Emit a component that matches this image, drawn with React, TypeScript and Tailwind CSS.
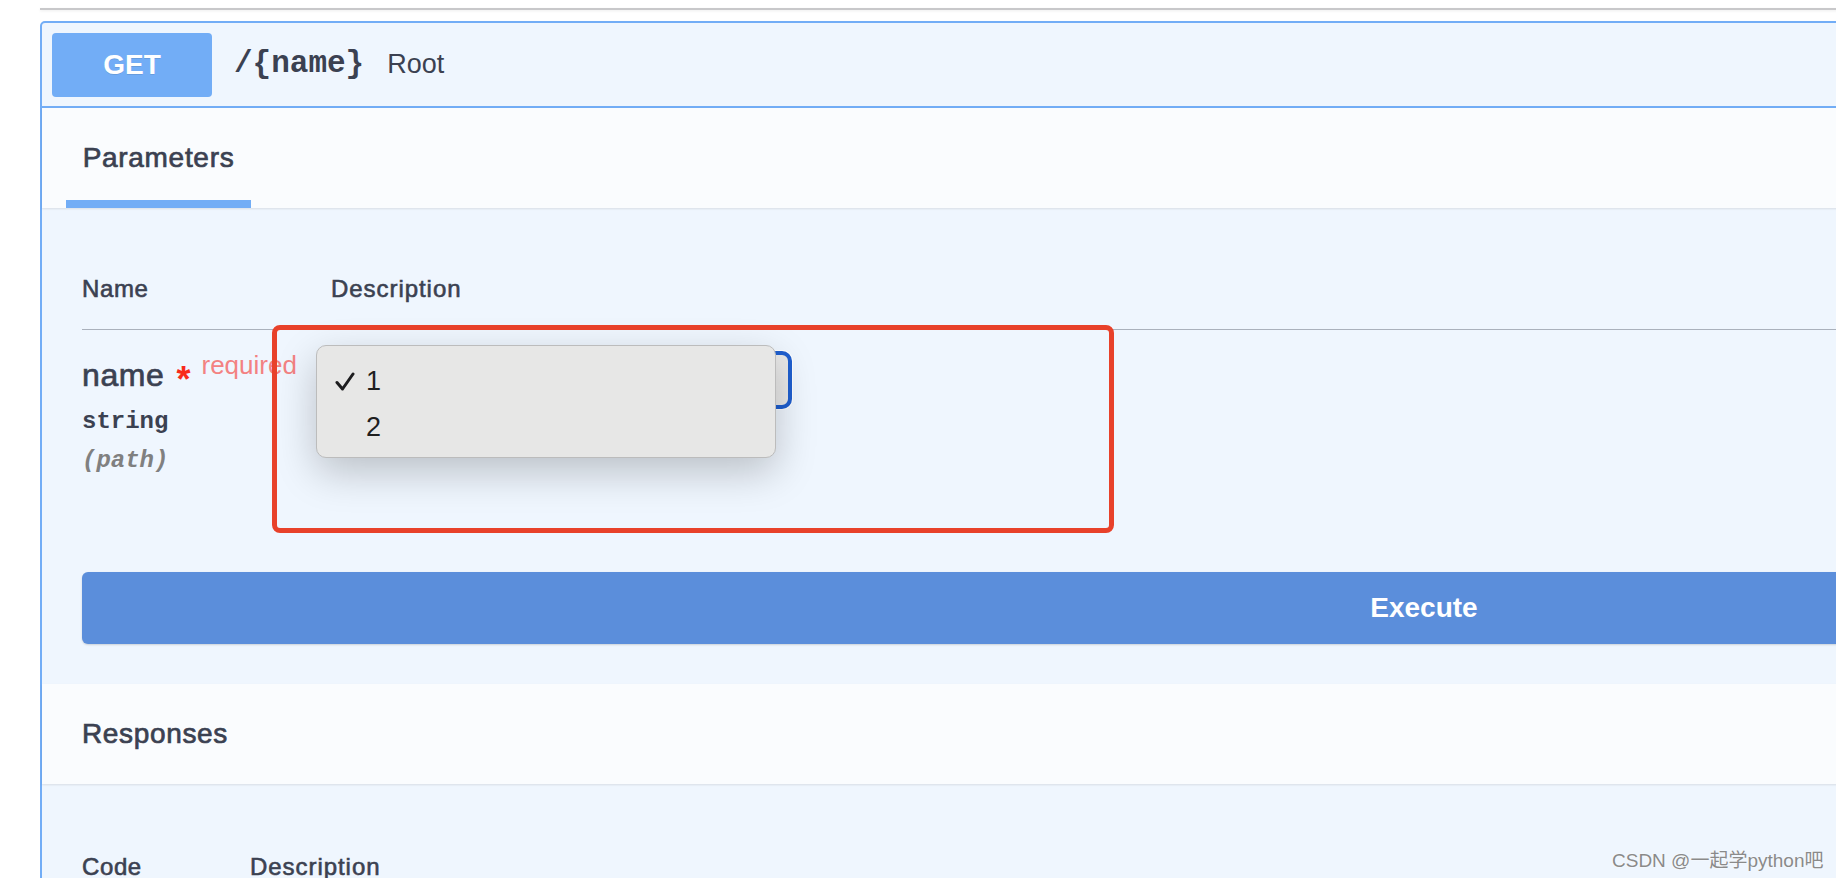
import React from 'react';

function CheckMark() {
  return (
    <svg width="20" height="19" viewBox="0 0 20 19" className="block">
      <path d="M2 10.5 L7.5 17 L18 2" fill="none" stroke="#1d1d1f" strokeWidth="3" strokeLinecap="round" strokeLinejoin="round" />
    </svg>
  );
}

export default function App() {
  return (
    <div className="relative h-[878px] w-[1836px] overflow-hidden bg-white font-['Liberation_Sans',Arial,sans-serif] text-[#3b4151]">
      <div className="w-[2808px]">
        <div className="ml-[40px] mt-[8px] h-[2px] bg-[#c8c8ca] shadow-[0_1px_3px_rgba(0,0,0,0.08)]" />

        {/* operation block */}
        <div className="ml-[40px] mt-[11px] rounded-[5px] border-2 border-[#72adf6] bg-[#eff6fe]">
          {/* summary */}
          <div className="flex h-[85px] items-center border-b-2 border-[#72adf6] px-[10px]">
            <div className="flex h-[64px] w-[160px] items-center justify-center rounded-[4px] bg-[#72adf6] text-[28px] font-bold text-white [text-shadow:0_1px_0_rgba(0,0,0,0.1)]">
              GET
            </div>
            <span className="ml-[22px] font-['Liberation_Mono',monospace] text-[31px] font-bold">/{'{name}'}</span>
            <span className="ml-[23px] text-[27px]">Root</span>
          </div>

          {/* tab header */}
          <div className="relative h-[100px] bg-[#fafcfe] shadow-[0_1px_2px_rgba(0,0,0,0.1)]">
            <div className="ml-[24px] flex w-[185px] flex-col">
              <div className="pt-[36px] text-center text-[28px] leading-[28px] tracking-[0.7px] [-webkit-text-stroke:0.7px_#3b4151]">
                Parameters
              </div>
              <div className="mt-[28px] h-[8px] bg-[#72adf6]" />
            </div>
          </div>

          {/* parameters */}
          <div className="px-[40px] pb-[40px] pt-[69px]">
            <div className="flex border-b border-[#aab1bc] pb-[28px] text-[24px] leading-[24px] [-webkit-text-stroke:0.6px_#3b4151]">
              <div className="w-[249px] tracking-[0.6px]">Name</div>
              <div className="tracking-[0.95px]">Description</div>
            </div>

            <div className="flex items-start">
              <div className="w-[249px] pt-[28px]">
                <div className="h-[32px] whitespace-nowrap leading-[32px]">
                  <span className="text-[32px] tracking-[0.6px] [-webkit-text-stroke:0.7px_#3b4151]">name</span>
                  <span className="relative top-[6px] ml-[12px] text-[36px] font-bold text-[#f82a1c]">*</span>
                  <span className="relative top-[-12px] ml-[11px] text-[26px] text-[#f38282]">required</span>
                </div>
                <div className="mt-[20px] font-['Liberation_Mono',monospace] text-[24px] font-bold leading-[24px]">string</div>
                <div className="mt-[15px] font-['Liberation_Mono',monospace] text-[24px] font-bold italic leading-[24px] text-[#808080]">
                  (path)
                </div>
              </div>
              <div className="pt-[21px]">
                <div className="h-[58px] w-[461px] rounded-[10px] border-4 border-[#1f5fcf] bg-[#e9e9e9] shadow-[0_0_0_1px_#ffffff]" />
              </div>
            </div>

            <button className="mt-[99px] flex h-[72px] w-full items-center justify-center rounded-[6px] bg-[#5b8edb] text-[28px] font-bold text-white shadow-[0_1px_2px_rgba(0,0,0,0.15)]">
              Execute
            </button>
          </div>

          {/* responses header */}
          <div className="flex h-[100px] items-center bg-[#fafcfe] px-[40px] shadow-[0_1px_2px_rgba(0,0,0,0.1)]">
            <span className="text-[28px] tracking-[0.65px] [-webkit-text-stroke:0.7px_#3b4151]">Responses</span>
          </div>

          <div className="flex px-[40px] pt-[71px] text-[24px] leading-[24px] [-webkit-text-stroke:0.6px_#3b4151]">
            <div className="w-[168px] tracking-[0.6px]">Code</div>
            <div className="tracking-[0.95px]">Description</div>
          </div>
          <div className="h-[200px]" />
        </div>
      </div>

      {/* native select popup */}
      <div className="absolute left-[316px] top-[345px] h-[113px] w-[460px] rounded-[10px] border border-[#bcbcbc] bg-[#e7e7e6] pl-[18px] pt-[12px] shadow-[0_14px_40px_rgba(0,0,0,0.22)]">
        <div className="flex h-[46px] items-center text-[27px] leading-[46px] text-[#1f1f1f]">
          <div className="w-[31px]">
            <CheckMark />
          </div>
          <span>1</span>
        </div>
        <div className="flex h-[46px] items-center text-[27px] leading-[46px] text-[#1f1f1f]">
          <div className="w-[31px]" />
          <span>2</span>
        </div>
      </div>

      {/* annotation box */}
      <div className="absolute left-[272px] top-[325px] h-[208px] w-[842px] rounded-[8px] border-[5px] border-[#e8412a]" />

      {/* watermark */}
      <div className="absolute left-[1612px] top-[847px] whitespace-nowrap font-['Liberation_Sans','Noto_Sans_CJK_SC',sans-serif] text-[19px] text-[#8a8a8a] [text-shadow:0_0_2px_#ffffff]">
        CSDN @一起学python吧
      </div>
    </div>
  );
}
